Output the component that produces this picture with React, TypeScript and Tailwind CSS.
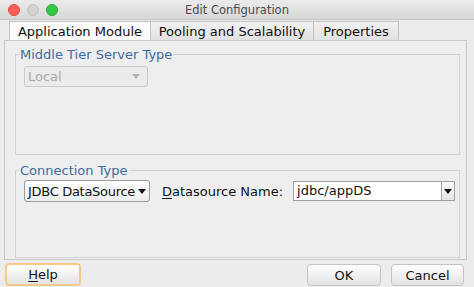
import React from "react";

function Arrow({ color = "#111" }: { color?: string }) {
  return (
    <svg width="8" height="5" viewBox="0 0 8 5" className="shrink-0">
      <polygon points="0,0 8,0 4,5" fill={color} />
    </svg>
  );
}

export default function App() {
  return (
    <div className="w-[474px] h-[287px] overflow-hidden bg-[#ececec] flex flex-col font-['DejaVu_Sans','Liberation_Sans',sans-serif] text-[13px] text-[#111111]">
      {/* title bar */}
      <div className="h-[20px] shrink-0 flex items-center bg-gradient-to-b from-[#ebebeb] to-[#d8d8d8] border-b border-[#c4c4c4]">
        <div className="w-[70px] flex items-center gap-[7px] pl-[8px]">
          <span className="w-[12px] h-[12px] rounded-full bg-[#fc5f57] border border-[#e1473f]" />
          <span className="w-[12px] h-[12px] rounded-full bg-[#d3d3d3] border border-[#c0c0c0]" />
          <span className="w-[12px] h-[12px] rounded-full bg-[#35c94a] border border-[#28ab36]" />
        </div>
        <div className="flex-1 text-center text-[11.5px] leading-[14px] text-[#4a4a4a]">Edit Configuration</div>
        <div className="w-[70px]" />
      </div>

      {/* tabs */}
      <div className="h-[20px] shrink-0 flex items-end pl-[9px]">
        <div className="w-[142px] h-[19px] flex items-center justify-center leading-[15px] bg-[#fafafa] border border-b-0 border-[#c2c2c2]">
          Application Module
        </div>
        <div className="w-[163px] h-[19px] flex items-center justify-center leading-[15px] bg-gradient-to-b from-[#f1f1f1] to-[#e1e1e1] border border-l-0 border-b-0 border-[#c2c2c2]">
          Pooling and Scalability
        </div>
        <div className="w-[85px] h-[19px] flex items-center justify-center leading-[15px] bg-gradient-to-b from-[#f1f1f1] to-[#e1e1e1] border border-l-0 border-b-0 border-[#c2c2c2]">
          Properties
        </div>
      </div>

      {/* panel */}
      <div className="ml-[4px] w-[463px] h-[220px] shrink-0 border border-[#c8c8c8] bg-[#eeeeee] flex flex-col">
        <fieldset className="mt-[6px] ml-[10px] mr-[6px] h-[108px] border border-[#d2d2d2] flex flex-col">
          <legend className="ml-[3px] px-[1px] leading-[15px] text-[#3d6b9e]">Middle Tier Server Type</legend>
          <div className="mt-[4px] ml-[8px] w-[124px] h-[21px] rounded-[3px] border border-[#cbcbcb] bg-[#ebebeb] flex items-center pl-[3px] pr-[7px] text-[#a9a9a9]">
            <span className="flex-1 leading-[15px]">Local</span>
            <Arrow color="#b3b3b3" />
          </div>
        </fieldset>

        <fieldset className="mt-[8px] ml-[10px] mr-[6px] h-[95px] border border-[#d2d2d2] flex flex-col">
          <legend className="ml-[3px] px-[1px] leading-[15px] text-[#3d6b9e]">Connection Type</legend>
          <div className="mt-[2px] ml-[8px] flex items-center">
            <div className="w-[126px] h-[22px] rounded-[3px] border border-[#9c9c9c] bg-gradient-to-b from-[#ffffff] to-[#ececec] flex items-center pl-[3px] pr-[3px]">
              <span className="flex-1 leading-[15px] whitespace-nowrap tracking-[-0.3px]">JDBC DataSource</span>
              <Arrow />
            </div>
            <span className="ml-[12px] leading-[15px] whitespace-nowrap">
              <span className="underline underline-offset-2">D</span>atasource Name:
            </span>
            <div className="ml-[10px] w-[162px] h-[20px] border border-[#9f9f9f] bg-white flex items-stretch">
              <span className="flex-1 pl-[3px] leading-[18px]">jdbc/appDS</span>
              <div className="w-[13px] border-l border-[#a3a3a3] bg-gradient-to-b from-[#fbfbfb] to-[#e4e4e4] flex items-center justify-center">
                <Arrow />
              </div>
            </div>
          </div>
        </fieldset>
      </div>

      {/* buttons */}
      <div className="flex items-start pt-[3px]">
        <button className="ml-[5px] w-[76px] h-[23px] rounded-[4px] border-2 border-[#f5c98c] bg-gradient-to-b from-[#ffffff] to-[#e4e4e4] flex items-center justify-center leading-[15px]">
          <span><span className="underline underline-offset-2">H</span>elp</span>
        </button>
        <div className="flex-1" />
        <button className="mt-[1px] w-[74px] h-[22px] rounded-[4px] border border-[#c4c4c4] bg-gradient-to-b from-[#ffffff] to-[#e2e2e2] flex items-center justify-center leading-[15px]">
          OK
        </button>
        <button className="mt-[1px] ml-[10px] mr-[10px] w-[73px] h-[22px] rounded-[4px] border border-[#c4c4c4] bg-gradient-to-b from-[#ffffff] to-[#e2e2e2] flex items-center justify-center leading-[15px]">
          Cancel
        </button>
      </div>
    </div>
  );
}
